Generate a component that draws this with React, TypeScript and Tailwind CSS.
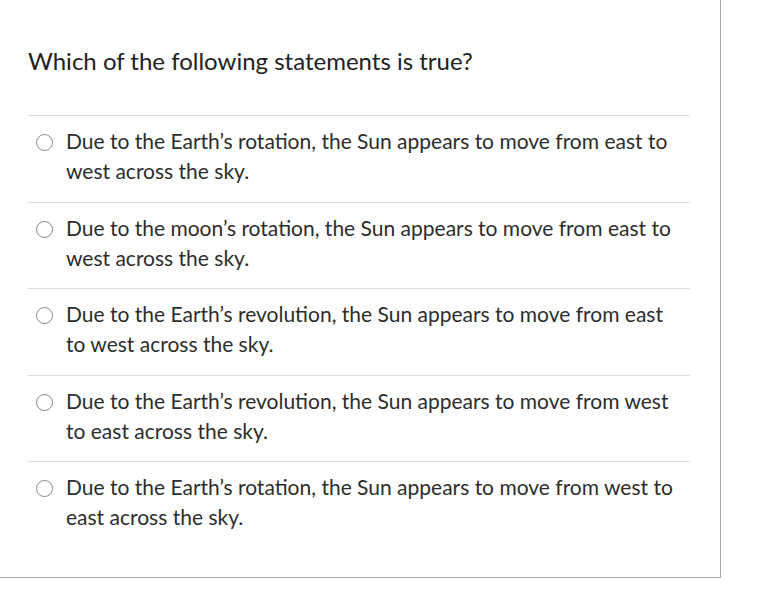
import React from "react";

const options = [
  "Due to the Earth\u2019s rotation, the Sun appears to move from east to west across the sky.",
  "Due to the moon\u2019s rotation, the Sun appears to move from east to west across the sky.",
  "Due to the Earth\u2019s revolution, the Sun appears to move from east to west across the sky.",
  "Due to the Earth\u2019s revolution, the Sun appears to move from west to east across the sky.",
  "Due to the Earth\u2019s rotation, the Sun appears to move from west to east across the sky.",
];

export default function App() {
  return (
    <div className="min-h-screen bg-white" style={{ fontFamily: "Lato, 'Noto Sans', sans-serif" }}>
      <div className="w-[721px] h-[578px] border-r border-b border-[#a8a8a8] pl-[28px] pt-[45px]">
        <h1 className="text-[24px] leading-[32px] font-normal text-[#222]">
          Which of the following statements is true?
        </h1>
        <div className="mt-[38px] w-[662px]">
          {options.map((o, i) => (
            <div key={i} className="flex border-t border-[#dedede] pt-[10px] pb-[15.5px]">
              <div className="w-[38px] flex justify-start pl-[8px] pt-[8px] shrink-0">
                <div className="w-[17px] h-[17px] rounded-full border border-[#888] bg-white" />
              </div>
              <p className="w-[614px] text-[21px] leading-[30px] text-[#2d2d2d]">{o}</p>
            </div>
          ))}
        </div>
      </div>
    </div>
  );
}
